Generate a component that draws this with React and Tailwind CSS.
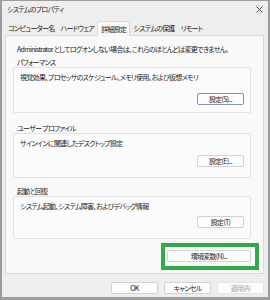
const tabs = ["コンピューター名", "ハードウェア", "詳細設定", "システムの保護", "リモート"];

function Btn({ children, className = "" }) {
  return (
    <div
      className={
        "h-[12px] w-[47px] flex items-center justify-center rounded-[2px] border bg-[#fdfdfd] text-[7px] leading-[10px] " +
        className
      }
    >
      {children}
    </div>
  );
}

function Group({ title, desc, button, btnTop, padBottom, focused }) {
  return (
    <div>
      <div className="pl-[4px] h-[10px] leading-[10px] text-[#1b1b1b]">{title}</div>
      <div
        className="border border-[#e2e2e2] rounded-[2px] bg-[#fbfbfb] pt-[4px] pl-[6px] pr-[6px]"
        style={{ paddingBottom: padBottom }}
      >
        <div className="h-[10px] leading-[10px] text-[#1b1b1b] whitespace-nowrap">{desc}</div>
        <div className="flex justify-end" style={{ marginTop: btnTop }}>
          <Btn className={focused ? "border-[#7d93b8] text-[#1b1b1b]" : "border-[#d2d2d2] text-[#1b1b1b]"}>
            {button}
          </Btn>
        </div>
      </div>
    </div>
  );
}

export default function App() {
  return (
    <div className="w-[270px] h-[300px] overflow-hidden bg-[#eeeeee] border-t border-l-[2px] border-r-[2px] border-b-[3px] border-[#9c9c9c] font-['Noto_Sans_CJK_JP',sans-serif] [font-feature-settings:'palt'] text-[7px] leading-[10px] tracking-[-0.7px] text-[#1b1b1b]">
      {/* title bar */}
      <div className="h-[16px] flex items-center justify-between pl-[5px] pr-[4px]">
        <span className="text-[#2b2b2b]">システムのプロパティ</span>
        <svg width="7" height="7" viewBox="0 0 7 7" className="mr-[1px]">
          <path d="M0.5 0.5L6.5 6.5M6.5 0.5L0.5 6.5" stroke="#444" strokeWidth="1" />
        </svg>
      </div>

      {/* tabs */}
      <div className="mt-[4px] ml-[3px] h-[14px] flex">
        {tabs.map((t) => (
          <div
            key={t}
            className={
              t === "詳細設定"
                ? "px-[3px] h-[15px] flex items-center bg-[#f9f9f9] border-t border-l border-r border-[#dadada] rounded-t-[2px] relative z-10"
                : "px-[3px] h-[14px] flex items-center text-[#1b1b1b]"
            }
          >
            {t}
          </div>
        ))}
      </div>

      {/* panel */}
      <div className="ml-[3px] w-[259px] h-[239px] border border-[#dadada] bg-[#f9f9f9] pt-[8px] pl-[7px] pr-[12px]">
        <div className="pl-[4px] h-[10px] leading-[10px] whitespace-nowrap">
          Administrator としてログオンしない場合は、これらのほとんどは変更できません。
        </div>

        <div className="mt-[3px]">
          <Group
            title="パフォーマンス"
            desc="視覚効果、プロセッサのスケジュール、メモリ使用、および仮想メモリ"
            button="設定(S)..."
            btnTop={11}
            padBottom={7}
            focused
          />
        </div>
        <div className="mt-[10px]">
          <Group
            title="ユーザー プロファイル"
            desc="サインインに関連したデスクトップ設定"
            button="設定(E)..."
            btnTop={7}
            padBottom={10}
          />
        </div>
        <div className="mt-[8px]">
          <Group
            title="起動と回復"
            desc="システム起動、システム障害、およびデバッグ情報"
            button="設定(T)"
            btnTop={5}
            padBottom={10}
          />
        </div>

        <div className="mt-[11px] flex justify-end">
          <div className="relative">
            <div className="h-[12px] w-[84px] flex items-center justify-center rounded-[2px] border border-[#d2d2d2] bg-[#fdfdfd]">
              環境変数(N)...
            </div>
            <div className="absolute -left-[6px] -right-[8px] -top-[7px] -bottom-[8px] border-[4px] border-[#34a94b]" />
          </div>
        </div>
      </div>

      {/* bottom buttons */}
      <div className="mt-[8px] ml-[3px] w-[259px] flex justify-end gap-[6px]">
        <Btn className="border-[#d2d2d2]">OK</Btn>
        <Btn className="border-[#d2d2d2]">キャンセル</Btn>
        <Btn className="border-[#e4e4e4] bg-[#f6f6f6] text-[#a3a3a3]">適用(A)</Btn>
      </div>
    </div>
  );
}
